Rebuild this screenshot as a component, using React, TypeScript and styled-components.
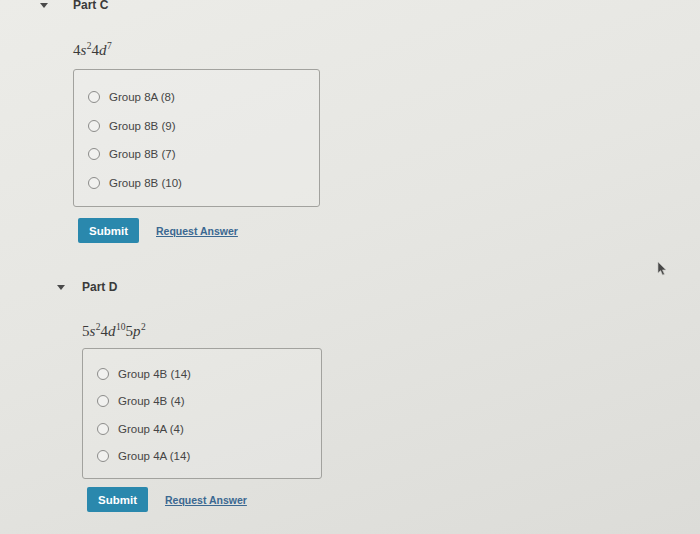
import React from "react";
import styled, { createGlobalStyle } from "styled-components";

interface PartData {
  title: string;
  formula: React.ReactNode;
  options: string[];
}

const GlobalStyle = createGlobalStyle`
  html, body {
    margin: 0;
    padding: 0;
  }
  body {
    font-family: "Liberation Sans", Arial, sans-serif;
    background: #e5e5e1;
  }
`;

const Page = styled.div`
  position: relative;
  width: 700px;
  height: 534px;
  overflow: hidden;
  background: linear-gradient(160deg, #ecece8 0%, #e6e6e2 45%, #dcdcd8 100%);
`;

const Section = styled.section<{ $left: number; $top: number }>`
  padding-left: ${(p) => p.$left}px;
  margin-top: ${(p) => p.$top}px;
`;

const Header = styled.div<{ $gap: number }>`
  display: flex;
  align-items: center;
  height: 20px;
  gap: ${(p) => p.$gap}px;
`;

const Caret = styled.span`
  width: 0;
  height: 0;
  border-left: 4px solid transparent;
  border-right: 4px solid transparent;
  border-top: 5px solid #4a4a4a;
`;

const Title = styled.div`
  font-size: 12px;
  font-weight: bold;
  color: #3a3a3a;
`;

const Body = styled.div<{ $indent: number }>`
  margin-left: ${(p) => p.$indent}px;
`;

const Formula = styled.div<{ $top: number }>`
  margin-top: ${(p) => p.$top}px;
  height: 18px;
  line-height: 18px;
  font-family: "Liberation Serif", "DejaVu Serif", serif;
  font-size: 15px;
  color: #3a3a3a;

  i {
    font-style: italic;
    margin-right: 0.5px;
  }
  sup {
    font-size: 9.5px;
    vertical-align: 6px;
    line-height: 0;
  }
`;

const OptionBox = styled.div<{
  $width: number;
  $padTop: number;
  $padBottom: number;
  $row: number;
  $top: number;
}>`
  margin-top: ${(p) => p.$top}px;
  width: ${(p) => p.$width}px;
  box-sizing: border-box;
  border: 1px solid #a2a29e;
  border-radius: 3px;
  background: rgba(255, 255, 255, 0.12);
  padding: ${(p) => p.$padTop}px 0 ${(p) => p.$padBottom}px 14px;
  display: flex;
  flex-direction: column;

  label {
    height: ${(p) => p.$row}px;
  }
`;

const Option = styled.label`
  display: flex;
  align-items: center;
  gap: 9px;
  font-size: 11.5px;
  color: #454545;
`;

const Radio = styled.span`
  width: 10px;
  height: 10px;
  border-radius: 50%;
  border: 1px solid #8c8c8a;
  background: #f1f1ef;
  flex-shrink: 0;
`;

const Actions = styled.div<{ $top: number }>`
  margin-top: ${(p) => p.$top}px;
  margin-left: 5px;
  display: flex;
  align-items: center;
  gap: 17px;
`;

const SubmitButton = styled.button`
  width: 61px;
  height: 25px;
  border: none;
  border-radius: 2px;
  background: #2a88ad;
  color: #ffffff;
  font-family: "Liberation Sans", Arial, sans-serif;
  font-size: 11.5px;
  font-weight: bold;
  padding: 0;
`;

const RequestLink = styled.a`
  font-size: 10.5px;
  font-weight: bold;
  color: #3b6891;
  text-decoration: underline;
`;

const Cursor = styled.svg`
  position: absolute;
  left: 657px;
  top: 261px;
  opacity: 0.85;
`;

const partC: PartData = {
  title: "Part C",
  formula: (
    <>
      4<i>s</i>
      <sup>2</sup>4<i>d</i>
      <sup>7</sup>
    </>
  ),
  options: ["Group 8A (8)", "Group 8B (9)", "Group 8B (7)", "Group 8B (10)"],
};

const partD: PartData = {
  title: "Part D",
  formula: (
    <>
      5<i>s</i>
      <sup>2</sup>4<i>d</i>
      <sup>10</sup>5<i>p</i>
      <sup>2</sup>
    </>
  ),
  options: ["Group 4B (14)", "Group 4B (4)", "Group 4A (4)", "Group 4A (14)"],
};

interface PartProps {
  part: PartData;
  left: number;
  top: number;
  gap: number;
  formulaTop: number;
  boxTop: number;
  boxWidth: number;
  padTop: number;
  padBottom: number;
  row: number;
  actionsTop: number;
}

const Part: React.FC<PartProps> = ({
  part,
  left,
  top,
  gap,
  formulaTop,
  boxTop,
  boxWidth,
  padTop,
  padBottom,
  row,
  actionsTop,
}) => {
  return (
    <Section $left={left} $top={top}>
      <Header $gap={gap}>
        <Caret />
        <Title>{part.title}</Title>
      </Header>
      <Body $indent={gap + 8}>
        <Formula $top={formulaTop}>{part.formula}</Formula>
        <OptionBox
          $width={boxWidth}
          $padTop={padTop}
          $padBottom={padBottom}
          $row={row}
          $top={boxTop}
        >
          {part.options.map((o) => (
            <Option key={o}>
              <Radio />
              {o}
            </Option>
          ))}
        </OptionBox>
        <Actions $top={actionsTop}>
          <SubmitButton>Submit</SubmitButton>
          <RequestLink>Request Answer</RequestLink>
        </Actions>
      </Body>
    </Section>
  );
};

const App: React.FC = () => {
  return (
    <Page>
      <GlobalStyle />
      <Part
        part={partC}
        left={40}
        top={-5}
        gap={25}
        formulaTop={26}
        boxTop={10}
        boxWidth={247}
        padTop={13}
        padBottom={9}
        row={28.5}
        actionsTop={11}
      />
      <Part
        part={partD}
        left={57}
        top={34}
        gap={17}
        formulaTop={25}
        boxTop={8}
        boxWidth={240}
        padTop={11}
        padBottom={8}
        row={27.5}
        actionsTop={8}
      />
      <Cursor width="11" height="15" viewBox="0 0 11 15">
        <path
          d="M1 1 L1 12 L3.6 9.6 L5.6 14 L7.4 13.2 L5.5 8.9 L9 8.9 Z"
          fill="#2e2e2e"
          stroke="#bcbcb8"
          strokeWidth="0.6"
        />
      </Cursor>
    </Page>
  );
};

export default App;
